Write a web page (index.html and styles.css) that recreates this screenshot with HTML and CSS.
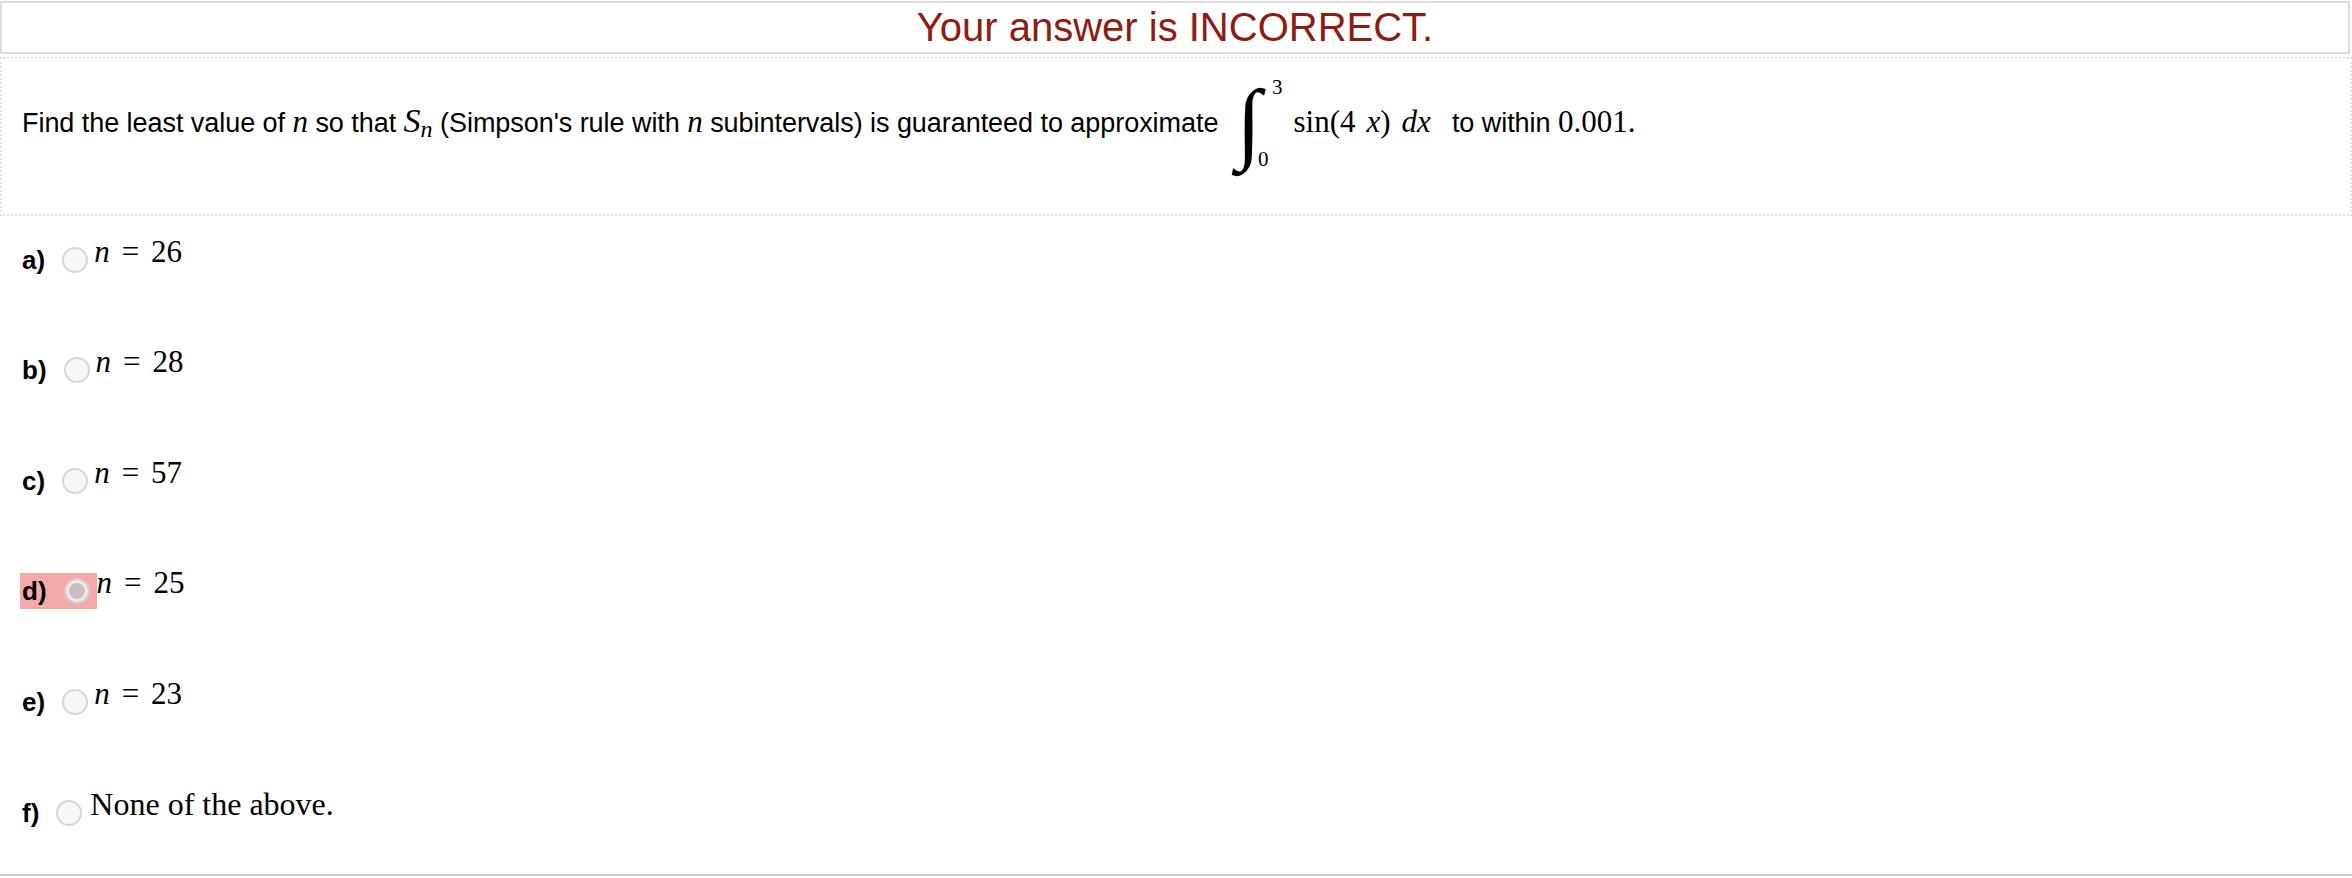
FILE: index.html
```html
<!DOCTYPE html>
<html lang="en">
<head>
<meta charset="utf-8">
<title>Simpson's rule question</title>
<link rel="stylesheet" href="styles.css">
</head>
<body>
<div class="result">Your answer is INCORRECT.</div>
<div class="question">
  <div class="qline"><span class="txt">Find the least value of </span><span class="m"><i>n</i></span><span class="txt"> so that </span><span class="m"><i class="big">S</i><sub class="sub"><i>n</i></sub></span><span class="txt"> (Simpson's rule with </span><span class="m"><i>n</i></span><span class="txt"> subintervals) is guaranteed to approximate</span><span class="int"><span class="int-sign">&#8747;</span><span class="lims"><span class="up">3</span><span class="lo">0</span></span></span><span class="m">sin(4<span class="sp"></span><i>x</i>)<span class="sp"></span><i>dx</i></span><span class="txt gap">to within </span><span class="m">0.001</span><span class="m">.</span></div>
</div>
<div class="options">
  <div class="opt"><span class="sel"><b class="lbl">a)</b><span class="radio"></span></span><span class="m"><i>n</i><span class="eq">=</span>26</span></div>
  <div class="opt"><span class="sel"><b class="lbl">b)</b><span class="radio"></span></span><span class="m"><i>n</i><span class="eq">=</span>28</span></div>
  <div class="opt"><span class="sel"><b class="lbl">c)</b><span class="radio"></span></span><span class="m"><i>n</i><span class="eq">=</span>57</span></div>
  <div class="opt"><span class="sel wrong"><b class="lbl">d)</b><span class="radio checked"></span></span><span class="m"><i>n</i><span class="eq">=</span>25</span></div>
  <div class="opt"><span class="sel"><b class="lbl">e)</b><span class="radio"></span></span><span class="m"><i>n</i><span class="eq">=</span>23</span></div>
  <div class="opt last"><span class="sel"><b class="lbl">f)</b><span class="radio"></span></span><span class="m none">None of the above.</span></div>
</div>
<div class="bottom"></div>
</body>
</html>
```

FILE: styles.css
```css
html, body {
  margin: 0;
  padding: 0;
  background: #ffffff;
}

body {
  width: 2352px;
  font-family: "Liberation Sans", Arial, sans-serif;
  color: #000;
  padding-top: 1px;
}

.result {
  margin-right: 2px;
  border: 2px solid #dddddd;
  height: 49px;
  line-height: 49px;
  text-align: center;
  font-size: 40px;
  color: #8d1c14;
}

.question {
  margin-top: 3px;
  border: 2px dotted #e2e2e2;
  height: 131px;
  padding-bottom: 24px;
  display: flex;
  align-items: center;
  padding-left: 20px;
}

.qline {
  font-size: 27px;
  letter-spacing: -0.05px;
  white-space: nowrap;
  line-height: 40px;
}

.m {
  font-family: "Liberation Serif", "Times New Roman", serif;
  font-size: 31px;
  letter-spacing: 0;
}

.m i {
  font-style: italic;
}

.big {
  font-size: 34px;
}

.sub {
  font-size: 24px;
  vertical-align: -5px;
  line-height: 0;
}

.sp {
  display: inline-block;
  width: 11px;
}

.int {
  display: inline-flex;
  vertical-align: middle;
  margin: 0 11px 0 18px;
  height: 88px;
  position: relative;
  top: -3px;
}

.int-sign {
  font-family: "Liberation Serif", "Times New Roman", serif;
  font-size: 90px;
  line-height: 88px;
  letter-spacing: -5px;
  display: inline-block;
}

.lims {
  display: flex;
  flex-direction: column;
  justify-content: space-between;
  font-family: "Liberation Serif", "Times New Roman", serif;
  font-size: 21px;
  line-height: 22px;
  letter-spacing: 0;
}

.up {
  margin-left: 16px;
  margin-top: -2px;
}

.lo {
  margin-left: 2px;
  margin-bottom: -4px;
}

.gap {
  margin-left: 21px;
}

.options {
  padding-top: 16px;
}

.opt {
  height: 110.4px;
  padding-left: 22px;
  font-size: 27px;
  line-height: 40px;
  white-space: nowrap;
}

.opt.last {
  height: 90px;
}

.sel {
  display: inline-block;
  padding: 0 6px 0 2px;
  margin-left: -2px;
  height: 36px;
  line-height: 36px;
  vertical-align: -7px;
}

.sel.wrong {
  background: #f4aaa9;
  padding-right: 7px;
}

.lbl {
  font-weight: bold;
  font-size: 26px;
}

.radio {
  display: inline-block;
  box-sizing: border-box;
  width: 26px;
  height: 26px;
  border-radius: 50%;
  border: 2px solid #d6d6d6;
  background: #f7f7f7;
  margin-left: 17px;
  vertical-align: -4px;
}

.radio.checked {
  border-color: #d9cccc;
  background: #c8bfbf;
  box-shadow: inset 0 0 0 3px #f4e9e9;
}

.eq {
  margin: 0 12px;
}

.none {
  font-size: 32px;
  margin-left: 2px;
}

.bottom {
  border-top: 2px solid #cccccc;
}
```
